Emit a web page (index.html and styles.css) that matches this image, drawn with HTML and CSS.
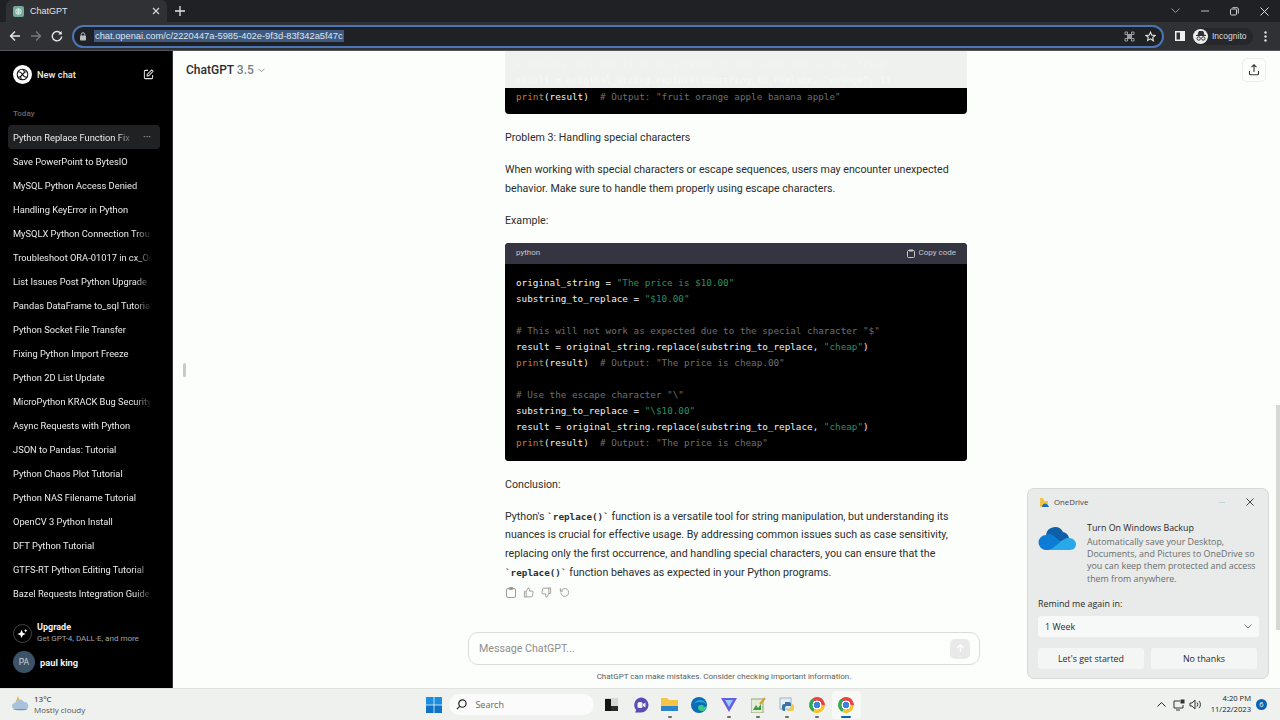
FILE: index.html
```html
<!DOCTYPE html>
<html lang="en">
<head>
    <meta charset="UTF-8">
    <title>ChatGPT</title>
    <link rel="stylesheet" href="styles.css">
</head>
<body>
    <!-- browser window frame -->
    <div class="tabstrip">
        <div class="tab">
            <span class="tab-icon"><svg width="11" height="11" viewBox="0 0 24 24" fill="none" stroke="#d5efe6" stroke-width="2"><circle cx="12" cy="12" r="6"/><path d="M12 5v14M6 8l12 8M18 8L6 16"/></svg></span>
            <span class="tab-title">ChatGPT</span>
            <svg class="tab-close" width="8" height="8" viewBox="0 0 8 8" stroke="#d6d6d6" stroke-width="1.2"><path d="M1 1l6 6M7 1L1 7"/></svg>
        </div>
        <svg class="tab-new" width="10" height="10" viewBox="0 0 10 10" stroke="#e4e4e4" stroke-width="1.3"><path d="M5 0v10M0 5h10"/></svg>
        <div class="window-btns">
            <svg width="9" height="6" viewBox="0 0 9 6" fill="none" stroke="#9a9a9a"><path d="M.5.5l4 4 4-4"/></svg>
            <svg width="8" height="2" viewBox="0 0 8 2" stroke="#bdbdbd"><path d="M0 1h8"/></svg>
            <svg width="9" height="9" viewBox="0 0 9 9" fill="none" stroke="#cfcfcf"><rect x=".5" y="2" width="6" height="6" rx="1"/><path d="M2.5 .7h4.5a1.3 1.3 0 0 1 1.3 1.3v4.5"/></svg>
            <svg width="9" height="9" viewBox="0 0 9 9" stroke="#dedede"><path d="M.5.5l8 8M8.500 .5l-8 8"/></svg>
        </div>
    </div>
    <div class="toolbar">
        <svg class="nav-btn" width="12" height="12" viewBox="0 0 12 12" fill="none" stroke="#e6e6e6" stroke-width="1.4"><path d="M11 6H1.500M6 1.500L1.500 6 6 10.500"/></svg>
        <svg class="nav-btn" width="12" height="12" viewBox="0 0 12 12" fill="none" stroke="#75777a" stroke-width="1.4"><path d="M1 6h9.500M6 1.500L10.500 6 6 10.500"/></svg>
        <svg class="nav-btn" width="12" height="12" viewBox="0 0 12 12" fill="none" stroke="#e6e6e6" stroke-width="1.4"><path d="M10.200 4A4.700 4.700 0 1 0 10.700 6.500"/><path d="M10.700 1v3.500H7.200" fill="#e6e6e6" stroke="none"/></svg>
        <div class="omnibox">
            <svg width="8" height="9" viewBox="0 0 8 9" fill="#b9bbbe"><rect x="1" y="3.500" width="6" height="5" rx=".8"/><path d="M2.300 3.800V2.400a1.700 1.700 0 0 1 3.400 0v1.400" fill="none" stroke="#b9bbbe"/></svg>
            <span class="url">chat.openai.com/c/2220447a-5985-402e-9f3d-83f342a5f47c</span>
            <svg class="omni-right" width="11" height="11" viewBox="0 0 11 11" fill="none" stroke="#9a9c9f"><rect x="3.500" y="3.500" width="4" height="4" fill="#9a9c9f"/><path d="M1 1h2.500v2.500H1zM7.500 1H10v2.500H7.500zM1 7.500h2.500V10H1zM7.500 7.500H10V10H7.500z"/></svg>
            <svg class="omni-star" width="11" height="11" viewBox="0 0 24 24" fill="none" stroke="#e0e0e0" stroke-width="2.400"><path d="M12 2.500l3 6.500 7 .8-5.200 4.700 1.500 7L12 17l-6.300 3.500 1.500-7L2 9.800 9 9z"/></svg>
        </div>
        <svg class="side-panel" width="10" height="10" viewBox="0 0 10 10"><rect width="10" height="10" fill="#f0f0f0"/><rect x="1.500" y="1.500" width="3.500" height="7" fill="#303134"/></svg>
        <div class="incognito">
            <span class="incognito-icon"><svg width="12" height="12" viewBox="0 0 12 12" fill="none" stroke="#303134"><path d="M1 5.500h10" /><path d="M3 5l1-3.500h4L9 5z" fill="#303134"/><circle cx="3.700" cy="8.500" r="1.700"/><circle cx="8.300" cy="8.500" r="1.700"/></svg></span>
            <span>Incognito</span>
        </div>
        <svg class="kebab" width="3" height="11" viewBox="0 0 3 11" fill="#e0e0e0"><circle cx="1.500" cy="1.500" r="1.200"/><circle cx="1.500" cy="5.500" r="1.200"/><circle cx="1.500" cy="9.500" r="1.200"/></svg>
    </div>

    <div class="app">
        <aside class="sidebar">
            <div class="new-chat">
                <span class="gpt-logo"><svg width="15" height="15" viewBox="0 0 24 24" fill="none" stroke="#111" stroke-width="1.700"><circle cx="12" cy="12" r="8.500"/><path d="M12 3.500c4 2 4 6 0 8.500s-4 6.500 0 8.500M4.600 7.800c4.500-.5 6.500 2.500 7.400 4.200s3.500 5 7.400 4.200M19.400 7.800c-4-.8-6 2-7.400 4.200s-3.500 5-7.400 4.200"/></svg></span>
                <span class="new-chat-label">New chat</span>
                <svg class="new-chat-edit" width="11" height="11" viewBox="0 0 12 12" fill="none" stroke="#e4e4e4" stroke-width="1.100"><path d="M5.500 1.500H2.500a1 1 0 0 0-1 1v7a1 1 0 0 0 1 1h7a1 1 0 0 0 1-1V6.500"/><path d="M4.500 7.500V6l5-5 1.500 1.500-5 5z"/></svg>
            </div>
            <div class="today">Today</div>
            <ul class="history">
                <li class="active"><span class="chat-name">Python Replace Function Fix</span><span class="dots">···</span></li>
                <li><span class="chat-name">Save PowerPoint to BytesIO</span></li>
                <li><span class="chat-name">MySQL Python Access Denied</span></li>
                <li><span class="chat-name">Handling KeyError in Python</span></li>
                <li><span class="chat-name">MySQLX Python Connection Trou</span></li>
                <li><span class="chat-name">Troubleshoot ORA-01017 in cx_Or</span></li>
                <li><span class="chat-name">List Issues Post Python Upgrade</span></li>
                <li><span class="chat-name">Pandas DataFrame to_sql Tutorial</span></li>
                <li><span class="chat-name">Python Socket File Transfer</span></li>
                <li><span class="chat-name">Fixing Python Import Freeze</span></li>
                <li><span class="chat-name">Python 2D List Update</span></li>
                <li><span class="chat-name">MicroPython KRACK Bug Security</span></li>
                <li><span class="chat-name">Async Requests with Python</span></li>
                <li><span class="chat-name">JSON to Pandas: Tutorial</span></li>
                <li><span class="chat-name">Python Chaos Plot Tutorial</span></li>
                <li><span class="chat-name">Python NAS Filename Tutorial</span></li>
                <li><span class="chat-name">OpenCV 3 Python Install</span></li>
                <li><span class="chat-name">DFT Python Tutorial</span></li>
                <li><span class="chat-name">GTFS-RT Python Editing Tutorial</span></li>
                <li><span class="chat-name">Bazel Requests Integration Guide</span></li>
            </ul>
            <div class="upgrade">
                <span class="upgrade-icon"><svg width="11" height="11" viewBox="0 0 12 12" fill="#fff"><path d="M5 2l1.300 3.200L9.500 6.500 6.300 7.800 5 11 3.700 7.800.5 6.500l3.200-1.300z"/><path d="M9.500 1l.6 1.400 1.400.6-1.400.6-.6 1.400-.6-1.400L7.500 3l1.400-.6z"/></svg></span>
                <div>
                    <div class="upgrade-title">Upgrade</div>
                    <div class="upgrade-sub">Get GPT-4, DALL·E, and more</div>
                </div>
            </div>
            <div class="account">
                <span class="avatar">PA</span>
                <span class="account-name">paul king</span>
            </div>
        </aside>

        <main class="chat">
            <header class="chat-head">
                <span class="model">ChatGPT <span class="model-ver">3.5</span></span>
                <svg width="7" height="5" viewBox="0 0 7 5" fill="none" stroke="#9b9b9b"><path d="M.5.800l3 3 3-3"/></svg>
                <button class="share"><svg width="12" height="12" viewBox="0 0 12 12" fill="none" stroke="#333" stroke-width="1.100"><path d="M6 8V1M3.500 3.200L6 .8l2.500 2.400M1.500 7v2.800a1 1 0 0 0 1 1h7a1 1 0 0 0 1-1V7"/></svg></button>
            </header>
            <div class="scroll-area">
                <article class="answer">
                    <div class="faded-code">
                        <div class="ghost ghost-top"># Replace only the first occurrence of the substring in the string</div>
                        <div class="ghost">result = original_string.replace(substring_to_replace, "orange", 1)</div>
                    </div>
                    <pre class="code-tail"><span class="kw">print</span>(result)  <span class="cm"># Output: "fruit orange apple banana apple"</span></pre>
                    <p class="p-head">Problem 3: Handling special characters</p>
                    <p>When working with special characters or escape sequences, users may encounter unexpected behavior. Make sure to handle them properly using escape characters.</p>
                    <p class="p-example">Example:</p>
                    <div class="code-block">
                        <div class="code-head">
                            <span>python</span>
                            <span class="copy"><svg width="8" height="9" viewBox="0 0 8 9" fill="none" stroke="#c9c9c9"><rect x=".5" y="1.500" width="7" height="7" rx="1"/><rect x="2" y=".5" width="4" height="2" fill="#c9c9c9" stroke="none"/></svg>Copy code</span>
                        </div>
<pre class="code-body">original_string = <span class="st">"The price is $10.00"</span>
substring_to_replace = <span class="st">"$10.00"</span>

<span class="cm"># This will not work as expected due to the special character "$"</span>
result = original_string.replace(substring_to_replace, <span class="st">"cheap"</span>)
<span class="kw">print</span>(result)  <span class="cm"># Output: "The price is cheap.00"</span>

<span class="cm"># Use the escape character "\"</span>
substring_to_replace = <span class="st">"\$10.00"</span>
result = original_string.replace(substring_to_replace, <span class="st">"cheap"</span>)
<span class="kw">print</span>(result)  <span class="cm"># Output: "The price is cheap"</span></pre>
                    </div>
                    <p class="p-concl">Conclusion:</p>
                    <p>Python's <code>`replace()`</code> function is a versatile tool for string manipulation, but understanding its nuances is crucial for effective usage. By addressing common issues such as case sensitivity, replacing only the first occurrence, and handling special characters, you can ensure that the <code>`replace()`</code> function behaves as expected in your Python programs.</p>
                    <div class="msg-actions">
                        <svg width="10" height="11" viewBox="0 0 10 11" fill="none" stroke="#9a9a9a"><rect x=".5" y="1.500" width="9" height="9" rx="1.500"/><rect x="3" y=".5" width="4" height="2" rx=".5"/></svg>
                        <svg width="11" height="11" viewBox="0 0 24 24" fill="none" stroke="#9a9a9a" stroke-width="2"><path d="M7 10v12H3V10zM7 10l4-8a3 3 0 0 1 3 3v4h6a2 2 0 0 1 2 2.300l-1.500 8.500a2 2 0 0 1-2 1.700H7"/></svg>
                        <svg width="11" height="11" viewBox="0 0 24 24" fill="none" stroke="#9a9a9a" stroke-width="2"><path d="M17 14V2h4v12zM17 14l-4 8a3 3 0 0 1-3-3v-4H4a2 2 0 0 1-2-2.300L3.500 4.200a2 2 0 0 1 2-1.700H17"/></svg>
                        <svg width="11" height="11" viewBox="0 0 24 24" fill="none" stroke="#9a9a9a" stroke-width="2"><path d="M4 12a8.500 8.500 0 1 0 3-6.500L3 9M3 3v6h6"/></svg>
                    </div>
                </article>
            </div>
            <div class="composer">
                <div class="composer-box">
                    <span class="placeholder">Message ChatGPT...</span>
                    <span class="send"><svg width="9" height="9" viewBox="0 0 10 10" fill="none" stroke="#fff" stroke-width="1.400"><path d="M5 9V1M1.500 4.500L5 1l3.500 3.500"/></svg></span>
                </div>
                <div class="disclaimer">ChatGPT can make mistakes. Consider checking important information.</div>
            </div>
            <span class="resize-handle"></span>
            <span class="scroll-thumb"></span>

            <!-- OneDrive toast over the page -->
            <section class="toast">
                <div class="toast-top">
                    <svg width="10" height="11" viewBox="0 0 10 11"><path d="M1 1h3l1.500 3H9v6H1z" fill="#f0c64a"/><path d="M3 10c0-2 1.500-3.500 3-3.500S9 8 10 10z" fill="#1f6fb5"/></svg>
                    <span class="toast-app">OneDrive</span>
                    <span class="toast-dots">···</span>
                    <svg width="8" height="8" viewBox="0 0 8 8" stroke="#444"><path d="M.5.5l7 7M7.500 .5l-7 7"/></svg>
                </div>
                <div class="toast-body">
                    <svg class="cloud" width="38" height="25" viewBox="0 0 38 25"><path d="M8 9a9 9 0 0 1 17-3 8 8 0 0 1 6 6l-14 6z" fill="#0f5ea8"/><path d="M8 9a7 7 0 0 1 8 1l12 10-17 4H8a7.500 7.500 0 0 1 0-15z" fill="#0c7cd5"/><path d="M31 12c4 0 7 3 7 6s-2 6-6 6H9c3 0 5-1 7-3l9-7c2-1.500 4-2 6-2z" fill="#29a8ea"/></svg>
                    <div>
                        <div class="toast-title">Turn On Windows Backup</div>
                        <div class="toast-text">Automatically save your Desktop, Documents, and Pictures to OneDrive so you can keep them protected and access them from anywhere.</div>
                    </div>
                </div>
                <div class="toast-label">Remind me again in:</div>
                <div class="toast-select">
                    <span>1 Week</span>
                    <svg width="8" height="5" viewBox="0 0 8 5" fill="none" stroke="#777"><path d="M.5.500L4 4 7.500 .5"/></svg>
                </div>
                <div class="toast-actions">
                    <button>Let's get started</button>
                    <button>No thanks</button>
                </div>
            </section>
        </main>
    </div>

    <footer class="taskbar">
        <div class="weather">
            <svg width="18" height="17" viewBox="0 0 18 17"><path d="M3 9l3-8 2 5 4 1z" fill="#eeb446"/><path d="M3 14a3 3 0 0 1 0-6 5 5 0 0 1 9-1 4 4 0 0 1 3 7z" fill="#a9c2dc"/><path d="M1 14h15a8 2 0 0 1-15 0z" fill="#6f93ba"/></svg>
            <div>
                <div class="temp">13°C</div>
                <div class="cond">Mostly cloudy</div>
            </div>
        </div>
        <div class="task-center">
            <span class="task-item"><svg width="16" height="16" viewBox="0 0 16 16" fill="#1a8ee0"><rect width="7.600" height="7.600"/><rect x="8.400" width="7.600" height="7.600"/><rect y="8.400" width="7.600" height="7.600" fill="#0f74c8"/><rect x="8.400" y="8.400" width="7.600" height="7.600" fill="#0f74c8"/></svg></span>
            <div class="task-search">
                <svg width="11" height="11" viewBox="0 0 12 12" fill="none" stroke="#222" stroke-width="1.300"><circle cx="7" cy="5" r="4"/><path d="M4 8l-3 3"/></svg>
                <span>Search</span>
            </div>
            <span class="task-item"><svg width="13" height="13" viewBox="0 0 13 13"><rect width="13" height="13" fill="#d8d8d8"/><rect x="0" y="1" width="6" height="12" fill="#151515"/><rect x="6" y="8" width="7" height="5" fill="#2a2a2a"/></svg></span>
            <span class="task-item"><svg width="16" height="16" viewBox="0 0 16 16"><path d="M8 .5a7.500 7.500 0 0 1 0 15H2l1.200-2.500A7.500 7.500 0 0 1 8 .5z" fill="#5a4bb5"/><rect x="4.500" y="5" width="5" height="6" rx="1.500" fill="#eef1ee"/><path d="M10 7l2.500-1.500v5L10 9z" fill="#eef1ee"/></svg></span>
            <span class="task-item has-dot"><svg width="17" height="15" viewBox="0 0 17 15"><path d="M0 1h6l2 2h9v11H0z" fill="#f6c545"/><rect y="9" width="17" height="5" fill="#2b85c8"/></svg></span>
            <span class="task-item"><svg width="16" height="16" viewBox="0 0 16 16"><circle cx="8" cy="8" r="8" fill="#0c6cb8"/><path d="M16 9c0 3-3 5-5 5-3 0-4-2-4-3.500C7 8.500 9 8 11 8c2 0 2 1.500 1 2 3 0 4-1 4-1z" fill="#39c98a"/><path d="M3 7c1-3 4-4 6-4s5 1 6 4c-2-2-9-3-12 0z" fill="#28a7d8"/></svg></span>
            <span class="task-item has-dot"><svg width="16" height="15" viewBox="0 0 16 15"><path d="M0 1l16 0-8 14z" fill="#6b5be0"/><path d="M4 3h8l-4 7z" fill="#8fd0ff"/></svg></span>
            <span class="task-item has-dot"><svg width="15" height="16" viewBox="0 0 15 16"><rect y="2" width="12" height="14" fill="#e5ecd8" stroke="#8aa870"/><path d="M2 13l3-5 2 3 3-4v6z" fill="#3e9b43"/><path d="M9 7l5-6" stroke="#d4a02c" stroke-width="2"/></svg></span>
            <span class="task-item has-dot"><svg width="16" height="16" viewBox="0 0 16 16"><rect x="1" y="1" width="11" height="11" fill="#e8eef5" stroke="#9cb2c8"/><path d="M6 5h4a2 2 0 0 1 2 2v2H8a2 2 0 0 0-2 2v3H5a2 2 0 0 1-2-2V9a2 2 0 0 1 2-2h1z" fill="#3873a6"/><path d="M12 7h1a2 2 0 0 1 2 2v3a2 2 0 0 1-2 2H8v-2h2a2 2 0 0 0 2-2z" fill="#f0c94a"/></svg></span>
            <span class="task-item has-dot"><span class="chrome-logo"></span></span>
            <span class="task-item active-app"><span class="chrome-logo"></span></span>
        </div>
        <div class="tray">
            <svg class="tray-up" width="9" height="5" viewBox="0 0 9 5" fill="none" stroke="#222"><path d="M.5 4.500l4-4 4 4"/></svg>
            <svg width="12" height="12" viewBox="0 0 12 12" fill="none" stroke="#333"><path d="M7 2H1v7h9V6"/><path d="M3 11h4"/><rect x="8" y="1" width="3" height="3" fill="#333"/></svg>
            <svg width="12" height="11" viewBox="0 0 12 11" fill="none" stroke="#333"><path d="M1 4v3h2l3 3V1L3 4zM8 3.500a3 3 0 0 1 0 4M10 2a5 5 0 0 1 0 7"/></svg>
            <div class="clock"><div>4:20 PM</div><div>11/22/2023</div></div>
            <span class="badge">6</span>
        </div>
    </footer>
</body>
</html>
```

FILE: styles.css
```css
* {
    box-sizing: border-box;
}
html, body {
    margin: 0;
    height: 720px;
    overflow: hidden;
}
body {
    display: flex;
    flex-direction: column;
    font-family: Roboto, "Liberation Sans", sans-serif;
    background: #fbfefb;
}
button {
    font-family: inherit;
}

/* browser frame */
.tabstrip {
    height: 22px;
    background: #202124;
    display: flex;
    align-items: center;
    padding-left: 6px;
}
.tab {
    width: 161px;
    height: 22px;
    background: #303134;
    border-radius: 6px 6px 0 0;
    display: flex;
    align-items: center;
    padding: 0 7px;
    color: #e3e3e3;
    font-family: "Liberation Sans", sans-serif;
    font-size: 9px;
}
.tab-icon {
    width: 11px;
    height: 11px;
    background: #75a99a;
    border-radius: 2px;
    display: flex;
    margin-right: 6px;
}
.tab-title {
    flex: 1;
}
.tab-new {
    margin-left: 8px;
}
.window-btns {
    margin-left: auto;
    display: flex;
    align-items: center;
    gap: 21px;
    padding-right: 11px;
}
.toolbar {
    height: 29px;
    background: #303134;
    display: flex;
    align-items: center;
    padding-left: 9px;
    border-bottom: 1px solid #55575a;
}
.nav-btn {
    margin-right: 9px;
}
.nav-btn:nth-child(3) {
    margin-right: 9px;
}
.omnibox {
    width: 1092px;
    height: 23px;
    background: #202124;
    border: 2px solid #4a76b5;
    border-radius: 12px;
    display: flex;
    align-items: center;
    padding: 0 6px 0 5px;
}
.url {
    margin-left: 7px;
    background: #3e5a82;
    color: #dfe4ea;
    font-family: "Liberation Sans", sans-serif;
    font-size: 9.3px;
    line-height: 12px;
    padding: 0 1px;
}
.omni-right {
    margin-left: auto;
    margin-right: 10px;
}
.side-panel {
    margin-left: 11px;
}
.incognito {
    margin-left: 8px;
    height: 17px;
    width: 60px;
    background: #26272a;
    border-radius: 9px;
    display: flex;
    align-items: center;
    gap: 4px;
    color: #dcdcdc;
    font-family: "Liberation Sans", sans-serif;
    font-size: 8.5px;
    white-space: nowrap;
}
.incognito-icon {
    width: 15px;
    height: 15px;
    border-radius: 50%;
    background: #eee;
    display: flex;
    align-items: center;
    justify-content: center;
    flex-shrink: 0;
}
.kebab {
    margin-left: 11px;
}

/* page */
.app {
    height: 637px;
    display: flex;
}
.sidebar {
    width: 173px;
    flex-shrink: 0;
    background: #000;
    color: #ececec;
    display: flex;
    flex-direction: column;
    font-size: 9.3px;
    border-right: 1px solid #333;
}
.new-chat {
    height: 23px;
    margin-top: 12px;
    display: flex;
    align-items: center;
    padding: 0 18px 0 13px;
}
.gpt-logo {
    width: 19px;
    height: 19px;
    border-radius: 50%;
    background: #fff;
    display: flex;
    align-items: center;
    justify-content: center;
}
.new-chat-label {
    margin-left: 5px;
    font-weight: 500;
}
.new-chat-edit {
    margin-left: auto;
}
.today {
    margin: 22px 0 0 13px;
    height: 12px;
    line-height: 12px;
    font-size: 8px;
    color: #6b6b6b;
    font-weight: 500;
}
.history {
    list-style: none;
    margin: 5px 0 0 8px;
    padding: 0;
    width: 152px;
    height: 480px;
}
.history li {
    height: 24px;
    padding-left: 5px;
    display: flex;
    align-items: center;
    border-radius: 4px;
    white-space: nowrap;
}
.chat-name {
    flex: 1;
    min-width: 0;
    -webkit-mask-image: linear-gradient(to right, #000 122px, transparent 139px);
    mask-image: linear-gradient(to right, #000 122px, transparent 139px);
}
.history li.active {
    background: #202123;
}
.history li.active .chat-name {
    -webkit-mask-image: linear-gradient(to right, #000 104px, transparent 121px);
    mask-image: linear-gradient(to right, #000 104px, transparent 121px);
}
.dots {
    color: #bbb;
    width: 26px;
    font-size: 10px;
    text-align: center;
    flex-shrink: 0;
}
.upgrade {
    display: flex;
    align-items: center;
    gap: 5px;
    margin: 17px 0 0 13px;
}
.upgrade-icon {
    width: 19px;
    height: 19px;
    border-radius: 50%;
    border: 1px solid #444;
    display: flex;
    align-items: center;
    justify-content: center;
}
.upgrade-title {
    font-weight: 700;
    color: #f2f2f2;
    font-size: 9px;
    line-height: 11px;
}
.upgrade-sub {
    font-size: 8px;
    color: #a6a6a6;
    line-height: 11px;
}
.account {
    display: flex;
    align-items: center;
    margin: 7px 0 0 13px;
}
.avatar {
    width: 22px;
    height: 22px;
    border-radius: 50%;
    background: #3b5268;
    color: #c8d2db;
    font-size: 8.5px;
    display: flex;
    align-items: center;
    justify-content: center;
}
.account-name {
    margin-left: 5px;
    font-weight: 700;
    color: #f2f2f2;
}

.chat {
    flex: 1;
    position: relative;
    display: flex;
    flex-direction: column;
    min-width: 0;
    background: #fbfefb;
}
.chat-head {
    position: absolute;
    top: 0;
    left: 13px;
    right: 14px;
    height: 38px;
    display: flex;
    align-items: center;
    gap: 4px;
}
.model {
    font-size: 12px;
    font-weight: 500;
    color: #2b2b2b;
}
.model-ver {
    color: #7d7d7d;
}
.share {
    margin-left: auto;
    width: 24px;
    height: 24px;
    border: 1px solid #ececec;
    border-radius: 5px;
    background: transparent;
    display: flex;
    align-items: center;
    justify-content: center;
    padding: 0;
}
.scroll-area {
    height: 572px;
    overflow: hidden;
}
.answer {
    margin-left: 332px;
    width: 462px;
    font-size: 10.67px;
    line-height: 18.67px;
    color: #2d2d2d;
}
.answer p {
    margin: 0 0 13.300px;
}
.answer .p-head {
    margin-bottom: 14.300px;
}
.answer .p-example {
    margin-bottom: 12.300px;
}
.faded-code {
    height: 37px;
    background: #eef1ee;
    padding: 5px 0 0 11px;
    font-family: "DejaVu Sans Mono", monospace;
    font-size: 9.300px;
    line-height: 16px;
    color: #f5f7f5;
    overflow: hidden;
}
.ghost {
    filter: blur(.4px);
    white-space: pre;
}
.ghost-top {
    color: #f1f4f1;
}
.code-tail, .code-body {
    margin: 0;
    background: #000;
    color: #f3f3f3;
    font-family: "DejaVu Sans Mono", monospace;
    font-size: 9.300px;
    line-height: 16px;
    white-space: pre;
}
.code-tail {
    padding: 1px 11px 9px;
    height: 26px;
    border-radius: 0 0 4px 4px;
    margin-bottom: 14.500px;
}
.kw {
    color: #c9783c;
}
.st {
    color: #2c8f63;
}
.cm {
    color: #6f6f6f;
}
.code-block {
    background: #000;
    border-radius: 4px;
    overflow: hidden;
    margin-bottom: 14.500px;
}
.code-head {
    height: 21px;
    background: #343541;
    color: #c5c5d2;
    font-size: 8px;
    display: flex;
    align-items: center;
    justify-content: space-between;
    padding: 0 11px;
}
.copy {
    display: flex;
    align-items: center;
    gap: 4px;
}
.code-body {
    padding: 11px 11px 10px;
}
.answer code {
    font-family: "DejaVu Sans Mono", monospace;
    font-weight: 700;
    font-size: 9.300px;
}
.msg-actions {
    display: flex;
    align-items: center;
    gap: 7px;
    margin: -10px 0 0 1px;
    height: 14px;
}

.composer {
    flex: 1;
    padding: 9px 0 0 295px;
}
.composer-box {
    width: 512px;
    height: 33px;
    border: 1px solid #d9dcd9;
    border-radius: 10px;
    background: #fdfffd;
    display: flex;
    align-items: center;
    padding: 0 9px 0 10px;
    font-size: 10.67px;
    color: #8e8e8e;
}
.send {
    margin-left: auto;
    width: 20px;
    height: 20px;
    border-radius: 5px;
    background: #e8e9e8;
    display: flex;
    align-items: center;
    justify-content: center;
}
.disclaimer {
    width: 512px;
    font-size: 8px;
    line-height: 10px;
    color: #5d5d5d;
    text-align: center;
    margin-top: 7px;
}
.resize-handle {
    position: absolute;
    left: 10px;
    top: 312px;
    width: 3px;
    height: 14px;
    border-radius: 2px;
    background: #c9c9c9;
}
.scroll-thumb {
    position: absolute;
    right: 0;
    top: 354px;
    width: 4px;
    height: 225px;
    background: #d6d8d6;
}

/* OneDrive toast */
.toast {
    position: absolute;
    left: 854px;
    top: 437px;
    width: 242px;
    height: 191px;
    background: #e8ebe9;
    border: 1px solid #d5d8d6;
    border-radius: 7px;
    padding: 7px 11px 0 11px;
    color: #2a2a2a;
    font-family: "Open Sans", "Liberation Sans", sans-serif;
    font-size: 8.900px;
}
.toast-top {
    display: flex;
    align-items: center;
    height: 12px;
    font-size: 7.800px;
    padding-right: 3px;
}
.toast-app {
    margin-left: 5px;
    flex: 1;
    color: #444;
}
.toast-dots {
    color: #999;
    margin-right: 21px;
}
.toast-body {
    display: flex;
    margin-top: 13px;
    margin-right: -2px;
}
.cloud {
    flex-shrink: 0;
    margin: 5px 11px 0 -1px;
}
.toast-title {
    line-height: 13px;
}
.toast-text {
    color: #6a6d6c;
    line-height: 12.200px;
    margin-top: 2px;
}
.toast-label {
    margin: 12px 0 0 -1px;
    line-height: 13px;
}
.toast-select {
    margin: 6px 0 0 -1px;
    height: 21px;
    width: 221px;
    background: #f7f9f8;
    border-radius: 3px;
    display: flex;
    align-items: center;
    justify-content: space-between;
    padding: 0 7px;
}
.toast-actions {
    display: flex;
    gap: 7px;
    margin: 11px 0 0 -1px;
}
.toast-actions button {
    width: 107px;
    height: 21px;
    background: #f4f6f5;
    border: 0;
    border-radius: 3px;
    font-family: inherit;
    font-size: 8.900px;
    color: #2a2a2a;
    padding: 0;
}

/* windows taskbar */
.taskbar {
    height: 32px;
    background: #eef1ee;
    border-top: 1px solid #e0e2e0;
    display: grid;
    grid-template-columns: 1fr auto 1fr;
    align-items: center;
    font-family: "Open Sans", "Liberation Sans", sans-serif;
}
.weather {
    display: flex;
    align-items: center;
    gap: 4px;
    padding-left: 12px;
    font-size: 8px;
    line-height: 11px;
    margin-top: -2px;
}
.temp {
    color: #222;
}
.cond {
    color: #555;
}
.task-center {
    display: flex;
    align-items: center;
}
.task-item {
    width: 29.400px;
    height: 28px;
    display: flex;
    align-items: center;
    justify-content: center;
    position: relative;
    border-radius: 4px;
}
.task-item.active-app {
    background: #f7f9f7;
}
.has-dot::after, .active-app::after {
    content: "";
    position: absolute;
    bottom: 1px;
    left: 50%;
    width: 4px;
    height: 2px;
    margin-left: -2px;
    background: #6a6a6a;
    border-radius: 1px;
}
.active-app::after {
    width: 10px;
    margin-left: -5px;
    background: #0b62b5;
}
.task-search {
    width: 145px;
    height: 21px;
    margin: 0 1px 0 1px;
    border-radius: 11px;
    background: #fafbfa;
    display: flex;
    align-items: center;
    gap: 8px;
    padding-left: 7px;
    font-size: 9px;
    color: #666;
}
.task-search + .task-item {
    margin-left: 1px;
}
.chrome-logo {
    width: 16px;
    height: 16px;
    border-radius: 50%;
    background:
        radial-gradient(circle, #3f7fe0 0 3px, #fff 3.200px 4.400px, transparent 4.600px),
        conic-gradient(#e8453c 0 120deg, #f7c22f 120deg 240deg, #34a853 240deg 360deg);
    transform: rotate(-30deg);
}
.tray {
    display: flex;
    align-items: center;
    justify-content: flex-end;
    padding-right: 13px;
    gap: 4px;
    font-size: 7.600px;
    color: #222;
}
.tray-up {
    margin-right: 3px;
}
.clock {
    text-align: right;
    line-height: 11px;
    margin: -2px 1px 0 6px;
}
.badge {
    width: 11px;
    height: 11px;
    border-radius: 50%;
    background: #0b62b5;
    color: #fff;
    font-size: 7.500px;
    line-height: 11px;
    text-align: center;
}
```
